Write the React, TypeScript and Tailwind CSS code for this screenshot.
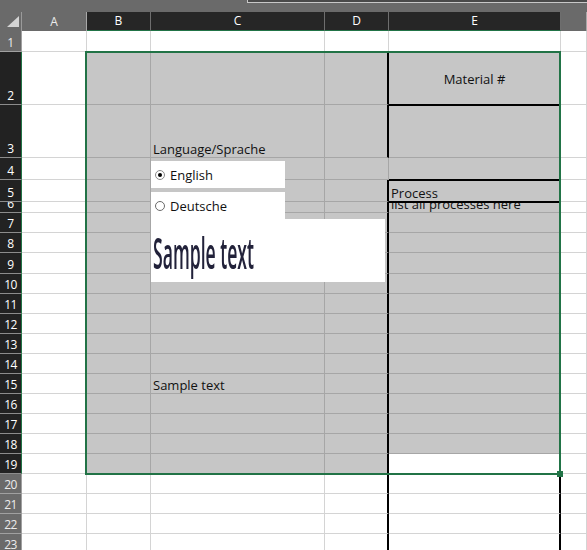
import React from "react";

const rowHeights = [21, 53, 53, 22, 22, 11, 20, 20, 21, 20, 20, 20, 20, 20, 20, 20, 20, 20, 20, 20, 20, 20, 20];
const colLetters = ["A", "B", "C", "D", "E", "F"];

function isShaded(r: number, c: number) {
  return r >= 2 && r <= 19 && c >= 1 && c <= 4 && !(r === 19 && c === 4);
}

function cellClasses(r: number, c: number) {
  const shaded = isShaded(r, c);
  const parts: string[] = ["relative"];
  parts.push(shaded ? "bg-[#c6c6c6]" : "bg-white");
  if (c === 3 && r >= 2 && r !== 4) {
    parts.push("border-r-2 border-r-black");
  } else if (c === 4 && r >= 20) {
    parts.push("border-r-2 border-r-black");
  } else {
    parts.push(shaded ? "border-r border-r-[#a6a6a6]" : "border-r border-r-[#d4d4d4]");
  }
  const blackBottom = c === 4 && (r === 2 || r === 4 || r === 5);
  if (blackBottom) {
    parts.push("border-b border-b-black");
  } else {
    parts.push(shaded ? "border-b border-b-[#a6a6a6]" : "border-b border-b-[#d4d4d4]");
  }
  const blackTop = c === 4 && (r === 3 || r === 5 || r === 6);
  if (blackTop) parts.push("border-t border-t-black");
  return parts.join(" ");
}

function CellContent({ r, c }: { r: number; c: number }) {
  if (r === 2 && c === 4) {
    return (
      <div className="flex h-full items-center justify-center pt-[3px] text-[13px] leading-[13px] text-[#111]">Material #</div>
    );
  }
  if (r === 3 && c === 2) {
    return (
      <div className="flex h-full items-end pl-[2px] pb-[1px] text-[13px] leading-[13px] text-[#111] whitespace-nowrap">
        Language/Sprache
      </div>
    );
  }
  if (r === 5 && c === 4) {
    return (
      <div className="flex h-full items-end pl-[2px] pb-[1px] text-[13px] leading-[13px] text-[#111] whitespace-nowrap">
        Process
      </div>
    );
  }
  if (r === 6 && c === 4) {
    return (
      <div className="flex h-full items-end overflow-hidden pl-[2px] pb-[1px] text-[13px] leading-[13px] text-[#111] whitespace-nowrap">
        list all processes here
      </div>
    );
  }
  if (r === 15 && c === 2) {
    return (
      <div className="flex h-full items-end pl-[2px] pb-[1px] text-[13px] leading-[13px] text-[#111] whitespace-nowrap">
        Sample text
      </div>
    );
  }
  return null;
}

export default function App() {
  return (
    <div className="relative h-[550px] w-[587px] overflow-hidden bg-white font-['Open_Sans',sans-serif]">
      {/* top strip */}
      <div className="flex h-[12px] bg-[#6a6a6a]">
        <div className="ml-[247px] h-[3px] flex-1 border-b border-l border-[#c8c8c8] bg-[#4a4a4a]" />
      </div>

      <div className="grid grid-cols-[22px_65px_64px_174px_64px_172px_1fr] grid-rows-[19px_21px_53px_53px_22px_22px_11px_20px_20px_21px_20px_20px_20px_20px_20px_20px_20px_20px_20px_20px_20px_20px_20px_20px]">
        {/* header row */}
        <div className="relative border-r border-r-[#9a9a9a] bg-[#6a6a6a]">
          <svg className="absolute left-0 top-0" width="22" height="19" viewBox="0 0 22 19">
            <polygon points="19,4 19,15 7,15" fill="#d4d4d4" />
          </svg>
        </div>
        {colLetters.map((l, i) => {
          const sel = i >= 1 && i <= 4;
          return (
            <div
              key={l}
              className={
                sel
                  ? "flex items-center justify-center border-b border-r border-b-[#217346] border-r-[#6e6e6e] bg-[#262626] text-[12px] leading-[12px] text-white"
                  : "flex items-center justify-center border-r border-r-[#a8a8a8] bg-[#6a6a6a] text-[12px] leading-[12px] text-[#ececec]"
              }
            >
              {i === 5 ? "" : l}
            </div>
          );
        })}

        {rowHeights.map((_, idx) => {
          const r = idx + 1;
          const sel = r >= 2 && r <= 19;
          return (
            <React.Fragment key={r}>
              <div
                className={
                  sel
                    ? "flex items-end justify-center overflow-hidden border-b border-r border-b-[#8c8c8c] border-r-[#217346] bg-[#222222] pb-[2px] text-[12px] leading-[12px] tracking-[-0.6px] text-white"
                    : "flex items-end justify-center overflow-hidden border-b border-r border-b-[#a0a0a0] border-r-[#a0a0a0] bg-[#6a6a6a] pb-[2px] text-[12px] leading-[12px] tracking-[-0.6px] text-[#ececec]"
                }
              >
                {r}
              </div>
              {colLetters.map((_, c) => (
                <div key={c} className={cellClasses(r, c)}>
                  <CellContent r={r} c={c} />
                </div>
              ))}
            </React.Fragment>
          );
        })}
      </div>

      {/* Form controls floating over the sheet */}
      <div className="absolute left-[151px] top-[161px] flex h-[27px] w-[134px] items-center gap-[5px] bg-white pl-[4px]">
        <div className="flex h-[10px] w-[10px] items-center justify-center rounded-full border border-[#8a8a8a] bg-white">
          <div className="h-[4px] w-[4px] rounded-full bg-black" />
        </div>
        <span className="pt-[2px] text-[13px] leading-[13px] text-[#111]">English</span>
      </div>
      <div className="absolute left-[151px] top-[192px] flex h-[27px] w-[134px] items-center gap-[5px] bg-white pl-[4px]">
        <div className="h-[10px] w-[10px] rounded-full border border-[#6a6a6a] bg-white" />
        <span className="pt-[2px] text-[13px] leading-[13px] text-[#111]">Deutsche</span>
      </div>
      <div className="absolute left-[151px] top-[219px] h-[63px] w-[234px] overflow-hidden bg-white pl-[2px] pt-[11px]">
        <div className="origin-left scale-x-[0.4] whitespace-nowrap text-[44px] font-semibold leading-[44px] text-[#22223a] blur-[0.3px]">
          Sample text
        </div>
      </div>

      {/* selection border */}
      <div className="absolute left-[85px] top-[51px] h-[424px] w-[476px] border-2 border-[#217346]" />
      <div className="absolute left-[557px] top-[471px] h-[6px] w-[6px] bg-[#217346]" />
    </div>
  );
}
